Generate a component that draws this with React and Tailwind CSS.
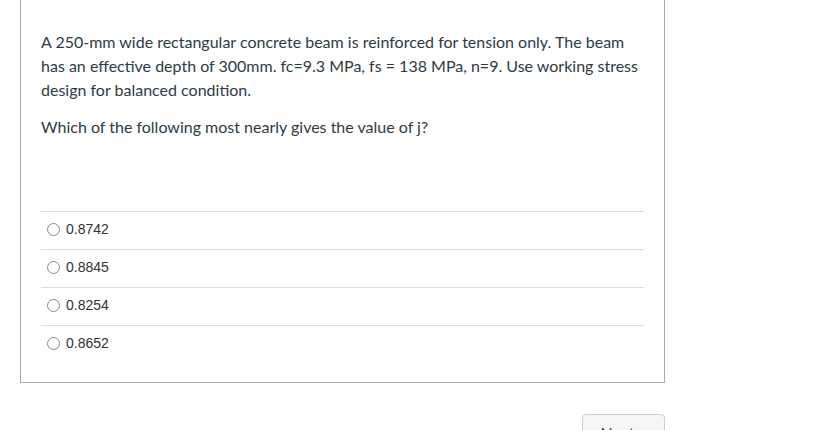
import React from 'react';

const answers = ['0.8742', '0.8845', '0.8254', '0.8652'];

const Radio = () => (
  <span className="inline-block w-[13px] h-[13px] rounded-full border border-[#8a8a8a] bg-white shrink-0" />
);

export default function App() {
  return (
    <div className="bg-white w-[823px] h-[430px] overflow-hidden font-['Lato',sans-serif] text-[#2d3b45]">
      <div className="ml-5 w-[645px] border border-t-0 border-[#aaaaaa] px-5 pt-[30px] pb-[19px]">
        <p className="text-[16px] leading-[24px]">
          A 250-mm wide rectangular concrete beam is reinforced for tension only. The beam has an effective depth of 300mm. fc=9.3 MPa, fs = 138 MPa, n=9. Use working stress design for balanced condition.
        </p>
        <p className="text-[16px] leading-[24px] mt-[13px]">Which of the following most nearly gives the value of j?</p>
        <div className="mt-[72px]">
          {answers.map((a) => (
            <div key={a} className="border-t border-[#dddddd] h-[38px] flex items-center gap-[6px] pl-[6px] pb-[3px] font-['Liberation_Sans',sans-serif] text-[14px] text-[#333333]">
              <Radio />
              <span>{a}</span>
            </div>
          ))}
        </div>
      </div>
      <div className="w-[665px] flex justify-end mt-[31px]">
        <button className="w-[83px] h-[38px] rounded-[4px] border border-[#c7cdd1] bg-[#f5f5f5] text-[#2d3b45] text-[16px] font-['Lato',sans-serif]">
          Next ▸
        </button>
      </div>
    </div>
  );
}
